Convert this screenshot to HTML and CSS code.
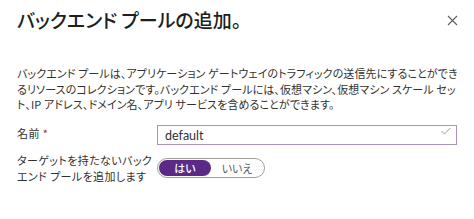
FILE: index.html
```html
<!DOCTYPE html>
<html lang="ja">
<head>
    <meta charset="UTF-8">
    <title>バックエンド プールの追加</title>
    <link rel="stylesheet" href="styles.css">
</head>
<body>
<div class="panel">
    <div class="header">
        <h1 class="title">バックエンド プールの追加。</h1>
        <button class="close" aria-label="閉じる">
            <svg width="11" height="11" viewBox="0 0 11 11"><path d="M1 1L10 10M10 1L1 10" stroke="#605e5c" stroke-width="1.1"/></svg>
        </button>
    </div>
    <p class="desc">バックエンド プールは、アプリケーション ゲートウェイのトラフィックの送信先にすることができ<br>るリソースのコレクションです。バックエンド プールには、仮想マシン、仮想マシン スケール セッ<br>ト、IP アドレス、ドメイン名、アプリ サービスを含めることができます。</p>
    <div class="row">
        <label class="label" for="name">名前 <span class="req">*</span></label>
        <div class="field">
            <input type="text" id="name" value="default">
            <svg class="check" width="10" height="8" viewBox="0 0 10 8"><path d="M0.5 4L3.5 7L9.5 0.8" fill="none" stroke="#7fb86d" stroke-width="1"/></svg>
        </div>
    </div>
    <div class="row">
        <div class="label">ターゲットを持たないバックエンド プールを追加します</div>
        <div class="toggle">
            <span class="opt on">はい</span>
            <span class="opt">いいえ</span>
        </div>
    </div>
</div>
</body>
</html>
```

FILE: styles.css
```css
* {
    margin: 0;
    padding: 0;
    box-sizing: border-box;
}
body {
    background-color: #ffffff;
    font-family: "Noto Sans CJK JP", "Noto Sans", sans-serif;
    color: #323130;
    font-feature-settings: "palt";
}
.panel {
    padding: 8px 17px 0 17px;
}
.header {
    display: flex;
    align-items: center;
    justify-content: space-between;
}
.title {
    font-size: 19px;
    font-weight: 500;
    line-height: 24px;
    color: #201f1e;
}
.close {
    border: 0;
    background: none;
    width: 20px;
    height: 20px;
    display: flex;
    align-items: center;
    justify-content: center;
    margin-right: -5px;
}
.desc {
    margin-top: 34px;
    font-size: 11px;
    line-height: 15.5px;
    letter-spacing: 0.1px;
    white-space: nowrap;
}
.row {
    display: flex;
    align-items: center;
    margin-top: 8px;
}
.row + .row {
    margin-top: 7px;
}
.label {
    width: 140px;
    font-size: 11px;
    line-height: 16px;
    letter-spacing: 0.4px;
}
.req {
    color: #a4262c;
}
.field {
    position: relative;
    width: 300px;
}
.field input {
    width: 100%;
    height: 20px;
    border: 1px solid #a893c9;
    padding: 0 20px 0 7px;
    font-family: "Lato", "Noto Sans", sans-serif;
    font-size: 12.5px;
    color: #323130;
}
.check {
    position: absolute;
    right: 6px;
    top: 6px;
}
.toggle {
    display: flex;
    width: 108px;
    height: 20px;
    border: 1px solid #a19f9d;
    border-radius: 10px;
    padding: 1px;
    font-size: 11px;
}
.opt {
    flex: 1;
    display: flex;
    align-items: center;
    justify-content: center;
    color: #605e5c;
    border-radius: 9px;
}
.opt.on {
    background-color: #5b2a86;
    color: #ffffff;
    font-weight: 500;
}
```
